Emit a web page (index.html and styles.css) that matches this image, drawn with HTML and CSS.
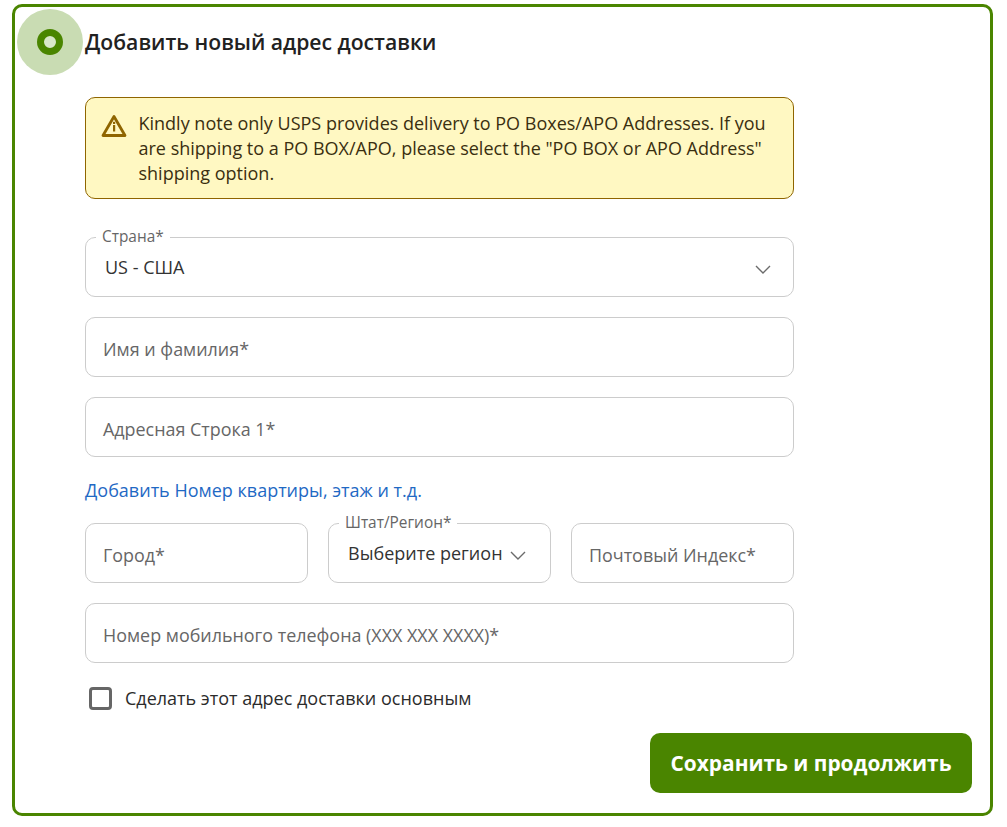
FILE: index.html
```html
<!DOCTYPE html>
<html>
	<head>
		<meta charset="UTF-8">
		<title>Добавить новый адрес доставки</title>
		<link rel="stylesheet" href="styles.css">
	</head>
	<body>
		<div class="card">
			<div class="head">
				<span class="halo"><span class="radio"></span></span>
				<h2>Добавить новый адрес доставки</h2>
			</div>
			<div class="content">
				<div class="alert">
					<svg class="alert-icon" width="26" height="24" viewBox="0 0 26 24">
						<path d="M13 2.5 L24 21.5 H2 Z" fill="none" stroke="#8f6500" stroke-width="2.8" stroke-linejoin="round"/>
						<rect x="12" y="11" width="2.2" height="6.5" fill="#8f6500"/>
						<rect x="12" y="7.8" width="2.2" height="2.2" fill="#8f6500"/>
					</svg>
					<p>Kindly note only USPS provides delivery to PO Boxes/APO Addresses. If you are shipping to a PO BOX/APO, please select the "PO BOX or APO Address" shipping option.</p>
				</div>
				<div class="field select country">
					<label>Страна*</label>
					<span class="value">US - США</span>
					<svg class="chev" width="16" height="9" viewBox="0 0 16 9"><path d="M1 1 L8 8 L15 1" fill="none" stroke="#6b6b6b" stroke-width="1.4"/></svg>
				</div>
				<div class="field"><span class="ph">Имя и фамилия*</span></div>
				<div class="field"><span class="ph">Адресная Строка 1*</span></div>
				<a class="more" href="#">Добавить Номер квартиры, этаж и т.д.</a>
				<div class="row">
					<div class="field"><span class="ph">Город*</span></div>
					<div class="field select region">
						<label>Штат/Регион*</label>
						<span class="value">Выберите регион</span>
						<svg class="chev" width="16" height="9" viewBox="0 0 16 9"><path d="M1 1 L8 8 L15 1" fill="none" stroke="#6b6b6b" stroke-width="1.4"/></svg>
					</div>
					<div class="field"><span class="ph">Почтовый Индекс*</span></div>
				</div>
				<div class="field"><span class="ph">Номер мобильного телефона (XXX XXX XXXX)*</span></div>
				<div class="check">
					<span class="box"></span>
					<span>Сделать этот адрес доставки основным</span>
				</div>
			</div>
			<div class="actions">
				<button class="save">Сохранить и продолжить</button>
			</div>
		</div>
	</body>
</html>
```

FILE: styles.css
```css
*{
	margin: 0;
	padding: 0;
	box-sizing: border-box;
}
body{
	font-family: "Open Sans", "Liberation Sans", sans-serif;
	color: #212121;
	background: #fff;
	padding: 4px 14px 0 12px;
}
.card{
	width: 981px;
	height: 812px;
	border: 3px solid #4a8500;
	border-radius: 10px;
	padding: 2px 18px 0 2px;
}
.head{
	display: flex;
	align-items: center;
	height: 66px;
}
.halo{
	width: 66px;
	height: 66px;
	border-radius: 50%;
	background: #c9dcb3;
	display: flex;
	align-items: center;
	justify-content: center;
}
.radio{
	width: 26px;
	height: 26px;
	border-radius: 50%;
	border: 7px solid #4a8500;
	background: #d9e7ca;
}
.head h2{
	margin-left: 2px;
	font-size: 21.17px;
	line-height: 28px;
	font-weight: 600;
	color: #212121;
}
.content{
	width: 709px;
	margin: 22px 0 0 68px;
}
.alert{
	display: flex;
	height: 102px;
	background: #fff8c2;
	border: 1px solid #8f6500;
	border-radius: 10px;
	padding: 13px 16px 0 15px;
	margin-bottom: 38px;
}
.alert-icon{
	flex: none;
	margin-top: 3px;
}
.alert p{
	margin-left: 11.5px;
	font-size: 18px;
	line-height: 25px;
	color: #3a2f10;
}
.field{
	position: relative;
	height: 60px;
	border: 1px solid #cccccc;
	border-radius: 10px;
	padding: 0 17px;
	display: flex;
	align-items: center;
	margin-bottom: 20px;
	font-size: 18px;
}
.ph{
	color: #666666;
	padding-top: 4px;
	font-size: 17.92px;
	white-space: nowrap;
}
.field label{
	position: absolute;
	top: -11px;
	left: 10px;
	padding: 0 6px;
	background: #fff;
	font-size: 15.4px;
	line-height: 19px;
	color: #666666;
}
.select .value{
	color: #333333;
	white-space: nowrap;
}
.select{
	justify-content: space-between;
	padding: 0 22px 0 19px;
}
.region{
	padding: 0 24px 0 19px;
}
.chev{
	margin-top: 4px;
}
.more{
	display: block;
	font-size: 18px;
	line-height: 24px;
	color: #1f69c4;
	text-decoration: none;
	margin: 21px 0 21px;
}
.row{
	display: grid;
	grid-template-columns: 223px 223px 223px;
	column-gap: 20px;
}
.check{
	display: flex;
	align-items: center;
	font-size: 18px;
	line-height: 24px;
	color: #2b2b2b;
	padding-top: 3px;
}
.box{
	width: 23px;
	height: 23px;
	margin: 0 13px 0 4px;
	border: 3px solid #666666;
	border-radius: 4px;
}
.actions{
	display: flex;
	justify-content: flex-end;
	margin-top: 23px;
}
.save{
	width: 322px;
	height: 60px;
	background: #4a8500;
	color: #fff;
	border: none;
	border-radius: 10px;
	font-family: inherit;
	font-size: 20.9px;
	font-weight: 700;
}
```
